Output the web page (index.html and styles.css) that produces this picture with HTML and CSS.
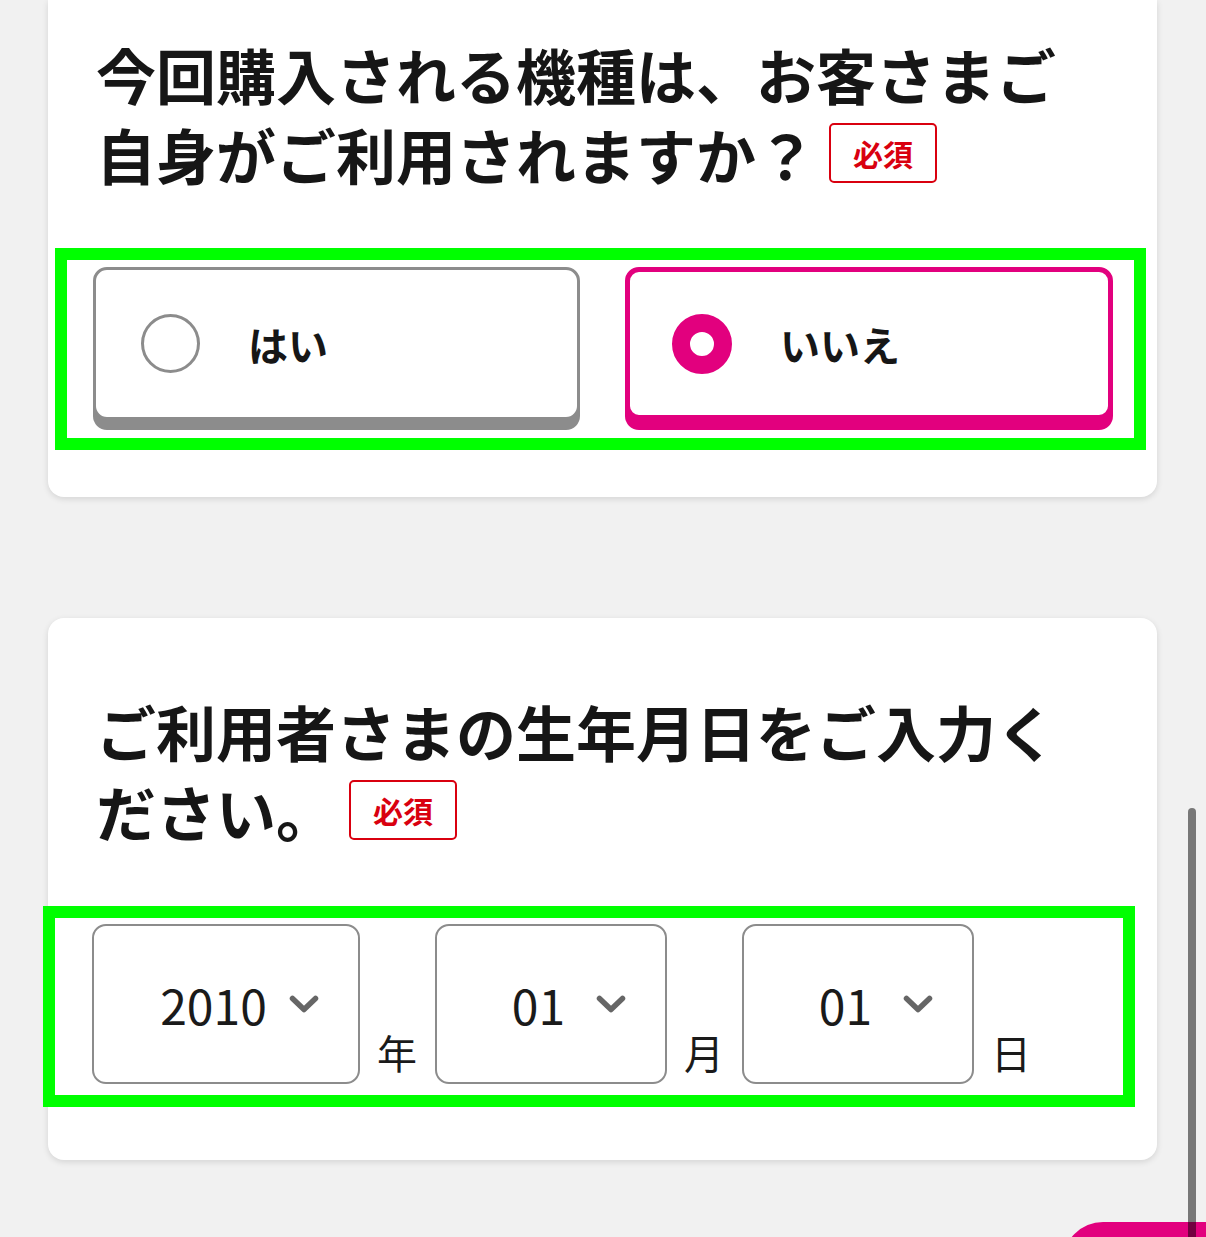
FILE: index.html
```html
<!DOCTYPE html>
<html lang="ja">
<head>
<meta charset="utf-8">
<title>購入手続き</title>
<link rel="stylesheet" href="styles.css">
</head>
<body>
<div class="page">
  <section class="card card--cut">
    <h2 class="q-title"><span class="q-line">今回購入される機種は、お客さまご</span><br><span class="q-line">自身がご利用されますか？</span><span class="badge">必須</span></h2>
    <div class="hl hl--radio">
      <div class="radio-group">
        <label class="choice"><span class="radio"></span><span class="choice-label">はい</span></label>
        <label class="choice choice--on"><span class="radio radio--on"></span><span class="choice-label">いいえ</span></label>
      </div>
    </div>
  </section>

  <section class="card card--dob">
    <h2 class="q-title"><span class="q-line">ご利用者さまの生年月日をご入力く</span><br><span class="q-line">ださい。</span><span class="badge">必須</span></h2>
    <div class="hl hl--date">
      <div class="date-row">
        <div class="select select--year">
          <span class="select-value">2010</span>
          <svg class="chev" viewBox="0 0 30 18" width="30" height="18"><path d="M3.5 3.5 L15 14.5 L26.5 3.5" /></svg>
        </div>
        <span class="unit">年</span>
        <div class="select select--md">
          <span class="select-value">01</span>
          <svg class="chev" viewBox="0 0 30 18" width="30" height="18"><path d="M3.5 3.5 L15 14.5 L26.5 3.5" /></svg>
        </div>
        <span class="unit">月</span>
        <div class="select select--md">
          <span class="select-value">01</span>
          <svg class="chev" viewBox="0 0 30 18" width="30" height="18"><path d="M3.5 3.5 L15 14.5 L26.5 3.5" /></svg>
        </div>
        <span class="unit">日</span>
      </div>
    </div>
  </section>
</div>
<div class="fab-clip"><div class="fab"></div></div>
<div class="scrollbar"></div>
</body>
</html>
```
FILE: styles.css
```css
html, body {
  margin: 0;
  padding: 0;
}
body {
  background: #f1f1f1;
  font-family: "Noto Sans CJK JP", "Noto Sans", sans-serif;
  color: #1a1a1a;
  width: 1206px;
  height: 1237px;
  overflow: hidden;
  position: relative;
}
.page {
  padding: 0 49px 0 48px;
}
.card {
  background: #fff;
  border-radius: 16px;
  box-shadow: 0 2px 6px rgba(0, 0, 0, 0.12);
  padding: 34px 48px 47px;
}
.card--cut {
  border-top-left-radius: 0;
  border-top-right-radius: 0;
}
.card--dob {
  margin-top: 121px;
  padding-top: 73px;
  padding-bottom: 53px;
}
.q-title {
  margin: 0;
  font-size: 60px;
  line-height: 80px;
  font-weight: 700;
  color: #161616;
}
.badge {
  display: inline-block;
  margin-left: 13px;
  height: 60px;
  box-sizing: border-box;
  padding: 0 22px;
  border: 2px solid #d9000f;
  border-radius: 5px;
  color: #d9000f;
  font-size: 30px;
  line-height: 56px;
  font-weight: 700;
  vertical-align: 14px;
}
.hl {
  border: 12px solid #00ff00;
}
.hl--radio {
  margin: 54px -37px 0 -41px;
  padding: 7px 21px 18px 26px;
}
.radio-group {
  display: flex;
  gap: 45px;
}
.choice {
  flex: 1;
  height: 153px;
  box-sizing: border-box;
  background: #fff;
  border: 3px solid #8c8c8c;
  border-radius: 14px;
  box-shadow: 0 10px 0 #8c8c8c;
  display: flex;
  align-items: center;
  padding-left: 45px;
}
.choice--on {
  border: 5px solid #e2007e;
  box-shadow: 0 10px 0 #e2007e;
  padding-left: 42px;
}
.radio {
  flex: none;
  width: 59px;
  height: 59px;
  box-sizing: border-box;
  border: 3px solid #8c8c8c;
  border-radius: 50%;
}
.radio--on {
  width: 60px;
  height: 60px;
  border: 18px solid #e2007e;
}
.choice-label {
  margin-left: 48px;
  font-size: 40px;
  font-weight: 700;
  line-height: 1;
  color: #161616;
}
.hl--date {
  margin: 55px -26px 0 -53px;
  padding: 6px 0 11px 37px;
}
.date-row {
  display: flex;
  align-items: flex-end;
}
.select {
  height: 160px;
  box-sizing: border-box;
  border: 2px solid #8c8c8c;
  border-radius: 14px;
  display: flex;
  align-items: center;
}
.select--year {
  width: 268px;
}
.select--md {
  width: 232px;
}
.select-value {
  flex: 1;
  text-align: center;
  padding-left: 44px;
  font-size: 48px;
  line-height: 1;
}
.chev {
  flex: none;
  margin-right: 39px;
  fill: none;
  stroke: #666666;
  stroke-width: 5.5;
  stroke-linecap: round;
  stroke-linejoin: round;
}
.unit {
  font-size: 40px;
  line-height: 1;
  margin: 0 18px 12px 17px;
}
.fab-clip {
  position: absolute;
  left: 1063px;
  top: 1222px;
  right: 0;
  bottom: 0;
  overflow: hidden;
}
.fab {
  width: 220px;
  height: 80px;
  background: #e2007e;
  border-radius: 40px;
}
.scrollbar {
  position: absolute;
  left: 1188px;
  top: 808px;
  bottom: 0;
  width: 8px;
  background: rgba(0, 0, 0, 0.5);
  border-radius: 4px 4px 0 0;
}
```
